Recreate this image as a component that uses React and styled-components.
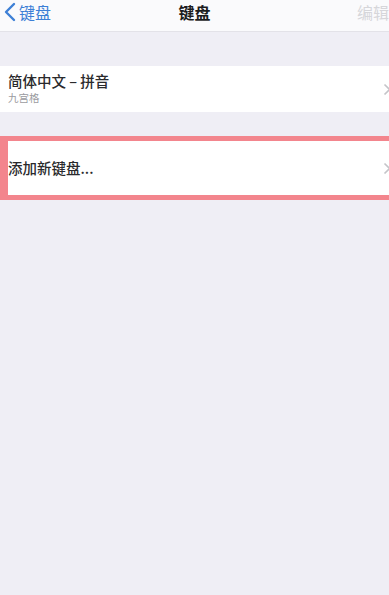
import React from "react";
import styled, { createGlobalStyle } from "styled-components";

const GlobalStyle = createGlobalStyle`
  html, body {
    margin: 0;
    padding: 0;
    background: #efeef5;
  }
  body {
    font-family: "Noto Sans CJK SC", "Noto Sans", sans-serif;
  }
`;

const Page = styled.div`
  width: 389px;
  height: 595px;
  overflow: hidden;
  background: #efeef5;
`;

const NavBar = styled.div`
  height: 32px;
  box-sizing: border-box;
  padding-top: 2px;
  display: grid;
  grid-template-columns: 1fr auto 1fr;
  align-items: start;
  background: #fafafc;
  border-bottom: 1px solid #e3e2e8;
`;

const BackButton = styled.div`
  display: flex;
  align-items: center;
  gap: 3px;
  padding-left: 3px;
  color: #3d7fd6;
  font-size: 16px;
  line-height: 20px;
`;

const Title = styled.div`
  font-size: 16px;
  line-height: 20px;
  font-weight: 700;
  color: #1c1c1e;
`;

const EditButton = styled.div`
  justify-self: end;
  font-size: 16px;
  line-height: 20px;
  color: #d6d6da;
`;

const Group = styled.div`
  margin-top: ${(p) => p.$top}px;
  background: #ffffff;
`;

const Highlight = styled.div`
  margin-top: ${(p) => p.$top}px;
  border: 5px solid #f3858d;
  border-left-width: 8px;
  border-right: none;
  background: #ffffff;
`;

const Row = styled.div`
  height: ${(p) => p.$height}px;
  display: flex;
  align-items: center;
  justify-content: space-between;
  padding-left: ${(p) => p.$pad}px;
`;

const Labels = styled.div`
  display: flex;
  flex-direction: column;
  gap: 1px;
  margin-top: -2px;
`;

const Label = styled.div`
  font-size: 14.5px;
  font-weight: 500;
  color: #2a2a2c;
  line-height: 18px;
`;

const SubLabel = styled.div`
  font-size: 10.5px;
  color: #9b9ba0;
  line-height: 13px;
`;

const Chevron = () => (
  <svg width="8" height="13" viewBox="0 0 8 13" style={{ marginRight: -2 }}>
    <path d="M1.5 1.5 L6.5 6.5 L1.5 11.5" fill="none" stroke="#c4c4c8" strokeWidth="1.6" />
  </svg>
);

export default function App() {
  return (
    <Page>
      <GlobalStyle />
      <NavBar>
        <BackButton>
          <svg width="13" height="20" viewBox="0 0 13 20">
            <path d="M11 2 L3 10 L11 18" fill="none" stroke="#3d7fd6" strokeWidth="2.4" strokeLinecap="round" strokeLinejoin="round" />
          </svg>
          <span>键盘</span>
        </BackButton>
        <Title>键盘</Title>
        <EditButton>编辑</EditButton>
      </NavBar>
      <Group $top={34}>
        <Row $height={46} $pad={8}>
          <Labels>
            <Label>简体中文 – 拼音</Label>
            <SubLabel>九宫格</SubLabel>
          </Labels>
          <Chevron />
        </Row>
      </Group>
      <Highlight $top={24}>
        <Row $height={54} $pad={0}>
          <Label>添加新键盘...</Label>
          <Chevron />
        </Row>
      </Highlight>
    </Page>
  );
}
